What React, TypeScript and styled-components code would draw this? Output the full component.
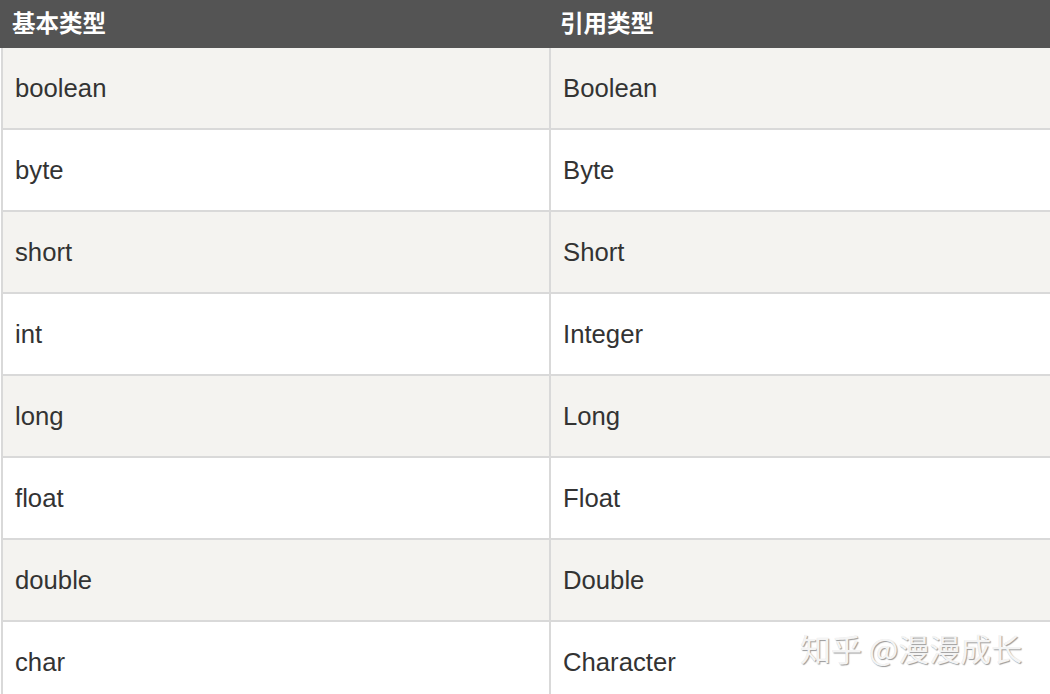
import React from "react";
import styled, { createGlobalStyle } from "styled-components";

const GlobalStyle = createGlobalStyle`
  html, body {
    margin: 0;
    padding: 0;
    background: #ffffff;
    overflow: hidden;
  }
  body {
    font-family: "Liberation Sans", "Noto Sans CJK SC", Arial, sans-serif;
  }
`;

const Page = styled.div`
  position: relative;
  width: 1050px;
  height: 694px;
  overflow: hidden;
  background: #ffffff;
`;

const Table = styled.div`
  display: grid;
  grid-template-columns: 548px 1fr;
  margin-left: 1px;
`;

const HeaderCell = styled.div<{ $first?: boolean }>`
  height: 48px;
  display: flex;
  align-items: center;
  padding: 0 0 4px;
  box-sizing: border-box;
  background: #545454;
  color: #ffffff;
  font-family: "Noto Sans CJK SC", "Liberation Sans", sans-serif;
  font-weight: 700;
  font-size: 23.5px;
  margin-left: ${(p) => (p.$first ? "-1px" : "0")};
  padding-left: ${(p) => (p.$first ? "12px" : "11px")};
`;

const Cell = styled.div<{ $shaded: boolean }>`
  height: 80px;
  display: flex;
  align-items: center;
  padding-left: 12px;
  border-left: 2px solid #d9d9d9;
  border-bottom: 2px solid #d9d9d9;
  background: ${(p) => (p.$shaded ? "#f4f3f0" : "#ffffff")};
  color: #333333;
  font-family: "Liberation Sans", Arial, sans-serif;
  font-size: 25.7px;
`;

const Watermark = styled.div`
  position: absolute;
  left: 800px;
  top: 628px;
  font-family: "Noto Sans CJK SC", sans-serif;
  font-size: 31px;
  line-height: 40px;
  color: #f4f4f4;
  text-shadow: 1px 1px 1px rgba(0, 0, 0, 0.4), -0.5px -0.5px 0 rgba(0, 0, 0, 0.08);
  white-space: pre;
`;

const rows: [string, string][] = [
  ["boolean", "Boolean"],
  ["byte", "Byte"],
  ["short", "Short"],
  ["int", "Integer"],
  ["long", "Long"],
  ["float", "Float"],
  ["double", "Double"],
  ["char", "Character"],
];

export default function App() {
  return (
    <Page>
      <GlobalStyle />
      <Table>
        <HeaderCell $first>基本类型</HeaderCell>
        <HeaderCell>引用类型</HeaderCell>
        {rows.map(([a, b], i) => (
          <React.Fragment key={a}>
            <Cell $shaded={i % 2 === 0}>{a}</Cell>
            <Cell $shaded={i % 2 === 0}>{b}</Cell>
          </React.Fragment>
        ))}
      </Table>
      <Watermark>知乎 @漫漫成长</Watermark>
    </Page>
  );
}
